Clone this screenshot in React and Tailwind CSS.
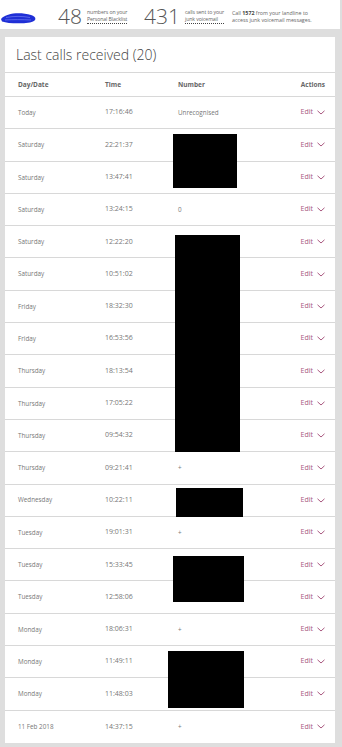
import React from 'react';

const calls = [
  ['Today', '17:16:46', 'Unrecognised'],
  ['Saturday', '22:21:37', ''],
  ['Saturday', '13:47:41', ''],
  ['Saturday', '13:24:15', '0'],
  ['Saturday', '12:22:20', ''],
  ['Saturday', '10:51:02', ''],
  ['Friday', '18:32:30', ''],
  ['Friday', '16:53:56', ''],
  ['Thursday', '18:13:54', ''],
  ['Thursday', '17:05:22', ''],
  ['Thursday', '09:54:32', ''],
  ['Thursday', '09:21:41', '+'],
  ['Wednesday', '10:22:11', ''],
  ['Tuesday', '19:01:31', '+'],
  ['Tuesday', '15:33:45', ''],
  ['Tuesday', '12:58:06', ''],
  ['Monday', '18:06:31', '+'],
  ['Monday', '11:49:11', ''],
  ['Monday', '11:48:03', ''],
  ['11 Feb 2018', '14:37:15', '+'],
];

// redacted numbers, page coordinates
const blocks = [
  { left: 173, top: 134, width: 64, height: 54 },
  { left: 175, top: 235, width: 65, height: 217 },
  { left: 176, top: 488, width: 67, height: 29 },
  { left: 173, top: 556, width: 71, height: 46 },
  { left: 168, top: 651, width: 76, height: 57 },
];

const Chevron = () => (
  <svg width="8" height="5" viewBox="0 0 8 5" fill="none" stroke="#a8587f" strokeWidth="1">
    <path d="M0.5 0.8 L4 4 L7.5 0.8" />
  </svg>
);

const Stat = ({ value, line1, line2, className }) => (
  <div className={`flex shrink-0 items-center ${className}`}>
    <span className="text-[21px] font-light leading-none text-[#555]">{value}</span>
    <div className="ml-[5px] flex flex-col whitespace-nowrap text-[5.2px] leading-[7px] tracking-[-0.1px] text-[#666]">
      <span>{line1}</span>
      <span className="border-b border-dotted border-[#444] leading-[6px] pb-[1px]">{line2}</span>
    </div>
  </div>
);

export default function App() {
  return (
    <div className="relative min-h-[747px] w-[342px] bg-[#dedede]" style={{ fontFamily: '"Open Sans", "Liberation Sans", sans-serif' }}>
      <div className="flex h-[29px] w-[340px] items-center bg-white pt-[4px]">
        <svg width="40" height="18" viewBox="0 0 40 18" className="shrink-0">
          <path d="M1 11 C6 5 20 4 31 7 C37 9 37 13 30 14.5 C20 16 8 15.5 2 13.5 Z" fill="#1f2fd6" />
          <path d="M6 9.5 C14 8 22 8 30 9.5 M5 12 C13 11.5 22 11.5 31 12" stroke="#6f7df0" strokeWidth="0.7" fill="none" />
        </svg>
        <Stat className="ml-[18px] w-[86px]" value="48" line1="numbers on your" line2="Personal Blacklist" />
        <Stat className="w-[88px]" value="431" line1="calls sent to your" line2="junk voicemail" />
        <div className="flex shrink-0 flex-col whitespace-nowrap text-[5.3px] leading-[7px] text-[#666]">
          <span>
            Call <b className="text-[#444]">1572</b> from your landline to
          </span>
          <span>access junk voicemail messages.</span>
        </div>
      </div>

      <div className="ml-[5px] mt-[8px] w-[330px] bg-white">
        <div className="flex h-[36px] items-center border-b border-[#d8d8d8] px-[11px] text-[14px] font-light text-[#444]">
          Last calls received (20)
        </div>
        <div className="flex h-[24px] items-center border-b border-[#d8d8d8] pl-[13px] pr-[10px] text-[6.5px] font-bold text-[#666]">
          <span className="w-[87px]">Day/Date</span>
          <span className="w-[73px]">Time</span>
          <span className="flex-1">Number</span>
          <span>Actions</span>
        </div>
        {calls.map(([day, time, number], i) => (
          <div
            key={i}
            className={`flex h-[32.3px] items-center pl-[13px] pr-[10px] text-[6.3px] text-[#777] ${i < calls.length - 1 ? 'border-b border-[#d8d8d8]' : ''}`}
          >
            <span className="w-[87px]">{day}</span>
            <span className="w-[73px] text-[7px] text-[#777]">{time}</span>
            <span className="flex-1">{number}</span>
            <span className="flex items-center gap-[4px] text-[7px] text-[#a8587f]">
              Edit <Chevron />
            </span>
          </div>
        ))}
      </div>

      {blocks.map((b, i) => (
        <div key={i} className="absolute bg-black" style={b} />
      ))}
    </div>
  );
}
